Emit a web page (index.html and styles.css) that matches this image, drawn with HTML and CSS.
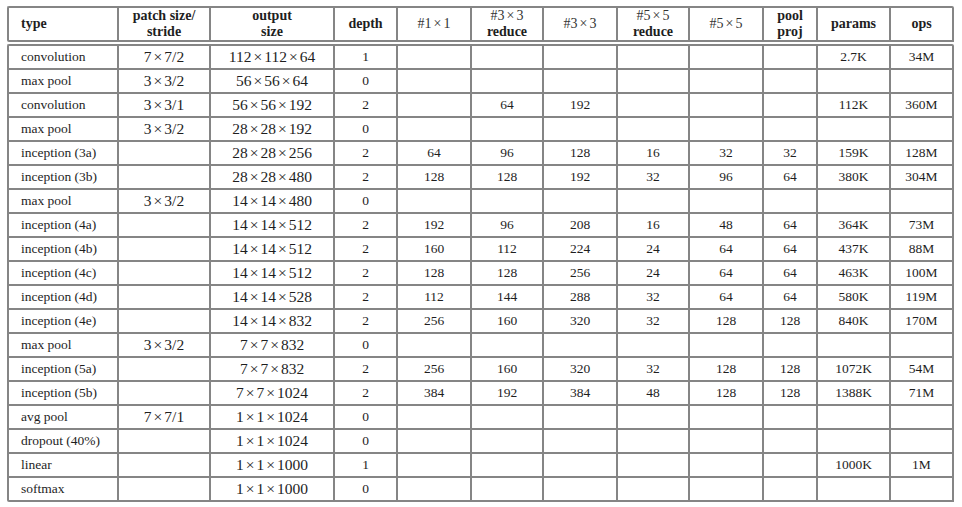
FILE: index.html
```html
<!DOCTYPE html>
<html>
<head>
<meta charset="utf-8">
<link rel="stylesheet" href="styles.css">
</head>
<body>
<div class="tbl">
  <div class="grid head">
    <div class="c l"><b>type</b></div>
    <div class="c two"><b>patch size/</b><b>stride</b></div>
    <div class="c two"><b>output</b><b>size</b></div>
    <div class="c"><b>depth</b></div>
    <div class="c"><span class="hm">#1<i>×</i>1</span></div>
    <div class="c two"><span class="hm">#3<i>×</i>3</span><b>reduce</b></div>
    <div class="c"><span class="hm">#3<i>×</i>3</span></div>
    <div class="c two"><span class="hm">#5<i>×</i>5</span><b>reduce</b></div>
    <div class="c"><span class="hm">#5<i>×</i>5</span></div>
    <div class="c two"><b>pool</b><b>proj</b></div>
    <div class="c"><b>params</b></div>
    <div class="c"><b>ops</b></div>
  </div>
  <div class="grid body" id="rows"></div>
</div>
<script src="app.js"></script>
</body>
</html>
```
FILE: styles.css
```css
html, body {
  margin: 0;
  background: #ffffff;
}
body {
  padding: 6px 0 0 7px;
  font-family: "Liberation Serif", "Times New Roman", serif;
  color: #1e1e1e;
  font-size: 14px;
}
.tbl {
  width: 947px;
  display: flex;
  flex-direction: column;
  gap: 2px;
}
.grid {
  display: grid;
  grid-template-columns: 110px 92px 124px 63px 74px 72px 74px 72px 74px 54px 73px 63px;
  border: 2px solid #858585;
  border-right: none;
  border-bottom: none;
  border-radius: 2px;
}
.c {
  box-sizing: border-box;
  border-right: 2px solid #858585;
  border-bottom: 2px solid #858585;
  display: flex;
  flex-direction: column;
  align-items: center;
  justify-content: center;
  white-space: nowrap;
}
.head .c {
  height: 34px;
  line-height: 16px;
  padding-bottom: 1px;
}
.head .c b {
  font-weight: bold;
}
.body .c {
  height: 24px;
  line-height: 22px;
}
.c.l {
  align-items: flex-start;
  padding-left: 12px;
}
.hm {
  font-size: 14px;
  color: #333;
}
.hm i {
  font-style: normal;
  margin: 0 2px;
}
.m {
  font-size: 15.5px;
}
.m i {
  font-style: normal;
  margin: 0 2px;
}
.n {
  font-size: 13.5px;
}
```
FILE: app.js
```js
var rows = [
  ["convolution","7×7/2","112×112×64","1","","","","","","","2.7K","34M"],
  ["max pool","3×3/2","56×56×64","0","","","","","","","",""],
  ["convolution","3×3/1","56×56×192","2","","64","192","","","","112K","360M"],
  ["max pool","3×3/2","28×28×192","0","","","","","","","",""],
  ["inception (3a)","","28×28×256","2","64","96","128","16","32","32","159K","128M"],
  ["inception (3b)","","28×28×480","2","128","128","192","32","96","64","380K","304M"],
  ["max pool","3×3/2","14×14×480","0","","","","","","","",""],
  ["inception (4a)","","14×14×512","2","192","96","208","16","48","64","364K","73M"],
  ["inception (4b)","","14×14×512","2","160","112","224","24","64","64","437K","88M"],
  ["inception (4c)","","14×14×512","2","128","128","256","24","64","64","463K","100M"],
  ["inception (4d)","","14×14×528","2","112","144","288","32","64","64","580K","119M"],
  ["inception (4e)","","14×14×832","2","256","160","320","32","128","128","840K","170M"],
  ["max pool","3×3/2","7×7×832","0","","","","","","","",""],
  ["inception (5a)","","7×7×832","2","256","160","320","32","128","128","1072K","54M"],
  ["inception (5b)","","7×7×1024","2","384","192","384","48","128","128","1388K","71M"],
  ["avg pool","7×7/1","1×1×1024","0","","","","","","","",""],
  ["dropout (40%)","","1×1×1024","0","","","","","","","",""],
  ["linear","","1×1×1000","1","","","","","","","1000K","1M"],
  ["softmax","","1×1×1000","0","","","","","","","",""]
];
var box = document.getElementById("rows");
rows.forEach(function (r) {
  r.forEach(function (v, i) {
    var d = document.createElement("div");
    d.className = "c" + (i === 0 ? " l" : "");
    if (v) {
      var s = document.createElement("span");
      if (i === 1 || i === 2) {
        s.className = "m";
        v.split("×").forEach(function (p, k) {
          if (k > 0) {
            var x = document.createElement("i");
            x.textContent = "×";
            s.appendChild(x);
          }
          s.appendChild(document.createTextNode(p));
        });
      } else {
        s.className = "n";
        s.textContent = v;
      }
      d.appendChild(s);
    }
    box.appendChild(d);
  });
});
```
